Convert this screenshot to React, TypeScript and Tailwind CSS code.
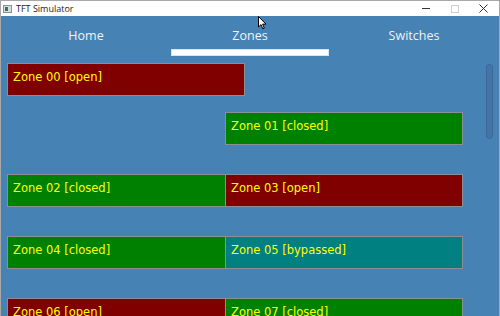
import type { ReactNode } from "react";

type ZoneState = "open" | "closed" | "bypassed";

const stateBg: Record<ZoneState, string> = {
    open: "bg-[#800000]",
    closed: "bg-[#008000]",
    bypassed: "bg-[#008080]",
};

function ZoneBox({ id, state, className = "" }: { id: string; state: ZoneState; className?: string }) {
    return (
        <div
            className={`h-[33px] w-[238px] shrink-0 border border-[#8a8f96] pl-[5px] pt-[6px] text-[11.5px] leading-[14px] text-[#ffff00] ${stateBg[state]} ${className}`}
            style={{ fontFamily: '"DejaVu Sans", sans-serif' }}
        >
            Zone {id} [{state}]
        </div>
    );
}

function Tab({ label, active }: { label: string; active?: boolean }) {
    return (
        <div className="flex w-[164px] flex-col items-stretch">
            <div className="h-[16px] text-center text-[12.5px] leading-[16px] text-[#f2f2f2]">{label}</div>
            <div className={`mx-[3px] mt-[5px] h-[7px] ${active ? "border border-[#d8e4f0] bg-white" : ""}`} />
        </div>
    );
}

function TitleButton({ children }: { children: ReactNode }) {
    return <div className="flex h-[15px] w-[29px] items-center justify-center">{children}</div>;
}

export default function App() {
    return (
        <div
            className="relative flex h-[316px] w-[500px] flex-col overflow-hidden border-x border-t border-[#a8a8a8] bg-[#4682b4]"
            style={{ fontFamily: '"Open Sans", sans-serif' }}
        >
            {/* window title bar */}
            <div className="flex h-[15px] shrink-0 items-center bg-white">
                <svg width="9" height="8" viewBox="0 0 9 8" className="ml-[2px]">
                    <rect x="0.5" y="0.5" width="8" height="7" fill="#d9dde2" stroke="#8a9099" />
                    <rect x="2" y="2" width="3" height="4" fill="#2f7d4f" />
                </svg>
                <span className="ml-[4px] text-[9px] leading-[15px] text-[#1a1a1a]">TFT Simulator</span>
                <div className="ml-auto flex pr-[1px]">
                    <TitleButton>
                        <div className="h-px w-[8px] bg-[#333]" />
                    </TitleButton>
                    <TitleButton>
                        <div className="h-[8px] w-[8px] border border-[#cfcfcf]" />
                    </TitleButton>
                    <TitleButton>
                        <svg width="9" height="9" viewBox="0 0 9 9">
                            <path d="M0.5 0.5 L8.5 8.5 M8.5 0.5 L0.5 8.5" stroke="#333" strokeWidth="1" />
                        </svg>
                    </TitleButton>
                </div>
            </div>

            {/* tab bar */}
            <div className="flex px-[3px] pt-[12px]">
                <Tab label="Home" />
                <Tab label="Zones" active />
                <Tab label="Switches" />
            </div>

            {/* zones */}
            <div className="flex flex-col">
                <ZoneBox id="00" state="open" className="ml-[6px] mt-[7px]" />
                <ZoneBox id="01" state="closed" className="ml-[224px] mt-[16px]" />
                <div className="ml-[6px] mt-[29px] flex">
                    <ZoneBox id="02" state="closed" />
                    <ZoneBox id="03" state="open" className="-ml-[20px]" />
                </div>
                <div className="ml-[6px] mt-[29px] flex">
                    <ZoneBox id="04" state="closed" />
                    <ZoneBox id="05" state="bypassed" className="-ml-[20px]" />
                </div>
                <div className="ml-[6px] mt-[29px] flex">
                    <ZoneBox id="06" state="open" />
                    <ZoneBox id="07" state="closed" className="-ml-[20px]" />
                </div>
            </div>

            {/* scrollbar */}
            <div className="absolute left-[485px] top-[63px] h-[75px] w-[7px] rounded-full border border-[#3a6898] bg-[#4475a8]" />

            {/* mouse cursor */}
            <svg className="absolute left-[257px] top-[15px]" width="9" height="14" viewBox="0 0 9 14">
                <path d="M0.5 0.5 L0.5 11 L3 8.6 L4.8 12.8 L6.3 12.1 L4.6 8.1 L8 8.1 Z" fill="#fff" stroke="#000" strokeWidth="1" strokeLinejoin="round" />
            </svg>
        </div>
    );
}
